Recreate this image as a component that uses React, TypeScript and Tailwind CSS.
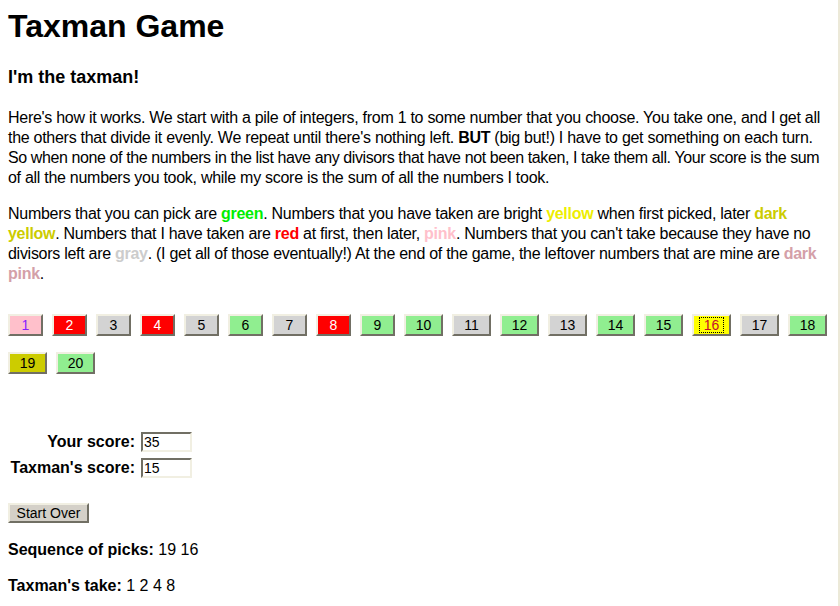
import React from 'react';

type Cell = { n: number; bg: string; fg: string; focused?: boolean };

const cells: Cell[] = [
  { n: 1, bg: 'bg-[#ffc0cb]', fg: 'text-[#8a1cff]' },
  { n: 2, bg: 'bg-[#ff0000]', fg: 'text-white' },
  { n: 3, bg: 'bg-[#d3d3d3]', fg: 'text-black' },
  { n: 4, bg: 'bg-[#ff0000]', fg: 'text-white' },
  { n: 5, bg: 'bg-[#d3d3d3]', fg: 'text-black' },
  { n: 6, bg: 'bg-[#90ee90]', fg: 'text-black' },
  { n: 7, bg: 'bg-[#d3d3d3]', fg: 'text-black' },
  { n: 8, bg: 'bg-[#ff0000]', fg: 'text-white' },
  { n: 9, bg: 'bg-[#90ee90]', fg: 'text-black' },
  { n: 10, bg: 'bg-[#90ee90]', fg: 'text-black' },
  { n: 11, bg: 'bg-[#d3d3d3]', fg: 'text-black' },
  { n: 12, bg: 'bg-[#90ee90]', fg: 'text-black' },
  { n: 13, bg: 'bg-[#d3d3d3]', fg: 'text-black' },
  { n: 14, bg: 'bg-[#90ee90]', fg: 'text-black' },
  { n: 15, bg: 'bg-[#90ee90]', fg: 'text-black' },
  { n: 16, bg: 'bg-[#ffff00]', fg: 'text-[#c4102c]', focused: true },
  { n: 17, bg: 'bg-[#d3d3d3]', fg: 'text-black' },
  { n: 18, bg: 'bg-[#90ee90]', fg: 'text-black' },
  { n: 19, bg: 'bg-[#cccc00]', fg: 'text-black' },
  { n: 20, bg: 'bg-[#90ee90]', fg: 'text-black' },
];

const raised =
  'border-2 border-t-[#f1efe2] border-l-[#f1efe2] border-b-[#716f64] border-r-[#716f64]';

const NumButton: React.FC<{ cell: Cell }> = ({ cell }) => (
  <button
    className={`${cell.n < 10 ? 'w-[35px]' : 'w-[39px]'} h-[22px] ${raised} ${cell.bg} ${cell.fg} text-[14px] leading-none flex items-center justify-center p-0`}
  >
    <span
      className={
        cell.focused
          ? 'border border-dotted border-black px-[4px] h-[16px] flex items-center'
          : ''
      }
    >
      {cell.n}
    </span>
  </button>
);

const ScoreRow: React.FC<{ label: string; value: string }> = ({ label, value }) => (
  <div className="flex items-center h-[26px]">
    <div className="w-[127px] text-right font-bold">{label}</div>
    <input
      readOnly
      value={value}
      className="ml-[6px] w-[51px] h-[20px] border-2 border-t-[#716f64] border-l-[#716f64] border-b-[#f1efe2] border-r-[#f1efe2] bg-white text-[14px] px-[1px] outline-none"
    />
  </div>
);

export default function App() {
  return (
    <div className="w-[840px] min-h-screen border-r-2 border-[#ece9d8] bg-white text-black px-2 pt-2 font-['Liberation_Sans',Arial,sans-serif] text-[16px] leading-[20px]">
      <h1 className="text-[32px] leading-[37px] font-bold">Taxman Game</h1>

      <h2 className="mt-[22px] text-[18px] leading-[21px] font-bold">I'm the taxman!</h2>

      <p className="mt-[20px] tracking-[-0.28px]">
        Here's how it works. We start with a pile of integers, from 1 to some number that you
        choose. You take one, and I get all the others that divide it evenly. We repeat until
        there's nothing left. <b>BUT</b> (big but!) I have to get something on each turn.{' '}
        <span className="tracking-[-0.4px]">
          So when none of the numbers in the list have any divisors that have not been taken, I
          take them all. Your score is the sum
        </span>{' '}
        of all the numbers you took, while my score is the sum of all the numbers I took.
      </p>

      <p className="mt-[16px] tracking-[-0.28px]">
        Numbers that you can pick are <b className="text-[#00ee00]">green</b>. Numbers that you
        have taken are bright <b className="text-[#eeee00]">yellow</b> when first picked, later{' '}
        <b className="text-[#cccc00]">dark yellow</b>. Numbers that I have taken are{' '}
        <b className="text-[#ff0000]">red</b> at first, then later,{' '}
        <b className="text-[#ffc0cb]">pink</b>. Numbers that you can't take because they have no
        divisors left are <b className="text-[#cccccc]">gray</b>. (I get all of those eventually!)
        At the end of the game, the leftover numbers that are mine are{' '}
        <b className="text-[#d4a0a8]">dark pink</b>.
      </p>

      <div className="mt-[30px] flex flex-wrap gap-x-[9px] gap-y-[16px]">
        {cells.map((c) => (
          <NumButton key={c.n} cell={c} />
        ))}
      </div>

      <div className="mt-[55px]">
        <ScoreRow label="Your score:" value="35" />
        <ScoreRow label="Taxman's score:" value="15" />
      </div>

      <button
        className={`mt-[22px] w-[81px] h-[20px] ${raised} bg-[#d4d0c8] text-[14px] leading-none flex items-center justify-center`}
      >
        Start Over
      </button>

      <p className="mt-[17px]">
        <b>Sequence of picks:</b> 19 16
      </p>
      <p className="mt-[16px]">
        <b>Taxman's take:</b> 1 2 4 8
      </p>
    </div>
  );
}
